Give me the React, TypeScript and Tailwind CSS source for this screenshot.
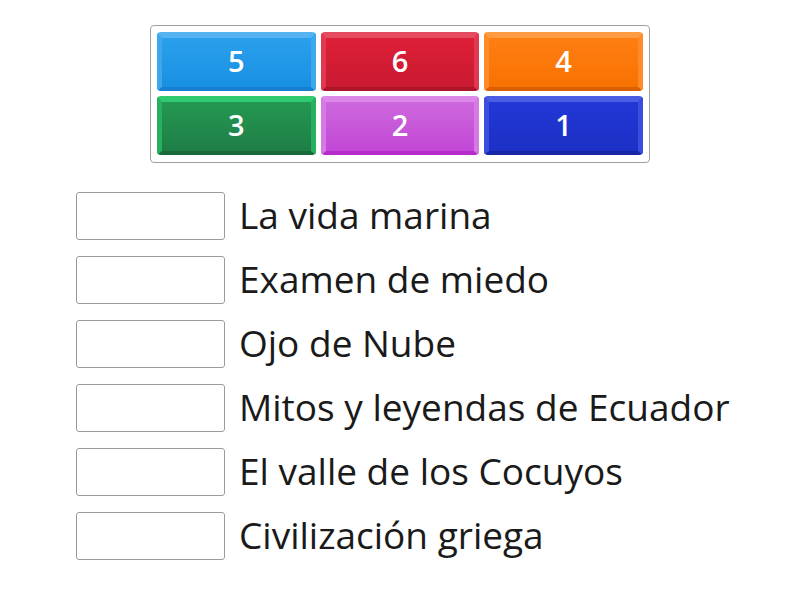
const tiles = [
  { n: "5", face: "bg-gradient-to-b from-[#2aa0ec] to-[#1890e2]", edge: "border-t-[#55b3f1] border-x-[#3ea8ee] border-b-[#1480cf]" },
  { n: "6", face: "bg-gradient-to-b from-[#de1f38] to-[#c91a31]", edge: "border-t-[#e54b5f] border-x-[#e0384e] border-b-[#ad1427]" },
  { n: "4", face: "bg-gradient-to-b from-[#ff7e12] to-[#f77200]", edge: "border-t-[#ff9b42] border-x-[#ff8c2a] border-b-[#d86000]" },
  { n: "3", face: "bg-gradient-to-b from-[#249853] to-[#1e7e45]", edge: "border-t-[#2ecb70] border-x-[#27b060] border-b-[#196a3a]" },
  { n: "2", face: "bg-gradient-to-b from-[#cd68dd] to-[#c246d6]", edge: "border-t-[#dc88e7] border-x-[#d47ae2] border-b-[#b72bcc]" },
  { n: "1", face: "bg-gradient-to-b from-[#2138d6] to-[#1d30c6]", edge: "border-t-[#4b5de2] border-x-[#3a4ddd] border-b-[#1727a6]" },
];

const answers = [
  "La vida marina",
  "Examen de miedo",
  "Ojo de Nube",
  "Mitos y leyendas de Ecuador",
  "El valle de los Cocuyos",
  "Civilización griega",
];

export default function App() {
  return (
    <div className="w-[800px] h-[600px] bg-white font-['Open_Sans',sans-serif]">
      <div className="pt-[25px] flex justify-center">
        <div className="w-[500px] border border-[#a0a0a0] rounded-[4px] px-[6px] pt-[6px] pb-[7px] grid grid-cols-3 gap-[5px]">
          {tiles.map((t) => (
            <div
              key={t.n}
              className={`h-[59px] rounded-[4px] border-t-[6px] border-x-[5px] border-b-[4px] ${t.edge} ${t.face} flex items-center justify-center text-white text-[29px] font-semibold`}
            >
              <span className="-mt-[3px]">{t.n}</span>
            </div>
          ))}
        </div>
      </div>

      <div className="pl-[76px] pt-[29px] flex flex-col gap-[16px]">
        {answers.map((a) => (
          <div key={a} className="flex items-center gap-[14px]">
            <div className="w-[149px] h-[48px] border border-[#9a9a9a] rounded-[3px] bg-white" />
            <span className="text-[37px] leading-none text-[#1a1a1a] -mt-[4px]">{a}</span>
          </div>
        ))}
      </div>
    </div>
  );
}
